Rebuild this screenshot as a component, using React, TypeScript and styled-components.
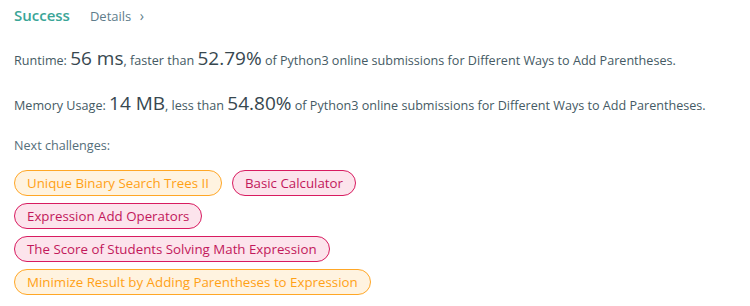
import styled, { createGlobalStyle } from "styled-components";

const GlobalStyle = createGlobalStyle`
  body {
    margin: 0;
    background: #fff;
    font-family: "Open Sans", "Noto Sans", sans-serif;
    color: #546e7a;
  }
`;

type Tone = "medium" | "hard";

const challenges: { title: string; tone: Tone }[][] = [
  [
    { title: "Unique Binary Search Trees II", tone: "medium" },
    { title: "Basic Calculator", tone: "hard" },
  ],
  [{ title: "Expression Add Operators", tone: "hard" }],
  [{ title: "The Score of Students Solving Math Expression", tone: "hard" }],
  [
    {
      title: "Minimize Result by Adding Parentheses to Expression",
      tone: "medium",
    },
  ],
];

export default function App() {
  return (
    <>
      <GlobalStyle />
      <Page>
        <Header>
          <Status>Success</Status>
          <DetailsLink>
            Details <Chevron>›</Chevron>
          </DetailsLink>
        </Header>
        <Stat>
          Runtime: <Big>56 ms</Big>, faster than <Big>52.79%</Big> of Python3
          online submissions for Different Ways to Add Parentheses.
        </Stat>
        <Stat>
          Memory Usage: <Big>14 MB</Big>, less than <Big>54.80%</Big> of
          Python3 online submissions for Different Ways to Add Parentheses.
        </Stat>
        <NextLabel>Next challenges:</NextLabel>
        <Tags>
          {challenges.map((row, i) => (
            <TagRow key={i}>
              {row.map((c) => (
                <Tag key={c.title} $tone={c.tone}>
                  {c.title}
                </Tag>
              ))}
            </TagRow>
          ))}
        </Tags>
      </Page>
    </>
  );
}

const Page = styled.div`
  padding: 5px 14px 0;
  display: flex;
  flex-direction: column;
`;

const Header = styled.div`
  display: flex;
  align-items: baseline;
  gap: 20px;
  height: 22px;
`;

const Status = styled.span`
  font-size: 15px;
  font-weight: 600;
  color: #3aa597;
`;

const DetailsLink = styled.span`
  font-size: 13px;
  color: #607d8b;
`;

const Chevron = styled.span`
  margin-left: 5px;
  font-size: 14px;
`;

const Stat = styled.div`
  margin-top: 20px;
  font-size: 12.6px;
  line-height: 22px;
  color: #455a64;
  white-space: nowrap;
`;

const Big = styled.span`
  font-size: 19px;
  color: #37474f;
`;

const NextLabel = styled.div`
  margin-top: 20px;
  font-size: 12.6px;
  line-height: 18px;
  color: #546e7a;
`;

const Tags = styled.div`
  margin-top: 15px;
  display: flex;
  flex-direction: column;
  gap: 7px;
`;

const TagRow = styled.div`
  display: flex;
  gap: 10px;
`;

const Tag = styled.span<{ $tone: Tone }>`
  display: inline-flex;
  align-items: center;
  height: 24px;
  padding: 0 12px;
  border-radius: 14px;
  font-size: 13.3px;
  border: 1px solid ${(p) => (p.$tone === "medium" ? "#ffa726" : "#d81b60")};
  background: ${(p) => (p.$tone === "medium" ? "#fff3e0" : "#fce4ec")};
  color: ${(p) => (p.$tone === "medium" ? "#ffa116" : "#c2185b")};
`;
